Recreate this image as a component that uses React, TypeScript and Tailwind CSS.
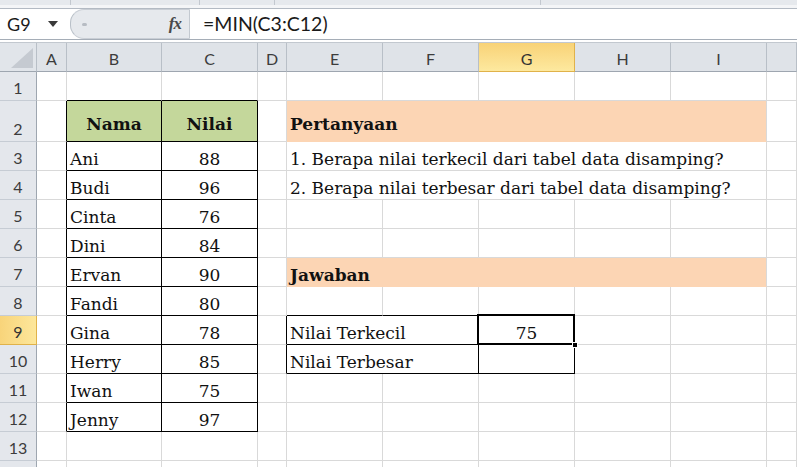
import React from 'react';

type Edge = 'g' | 'k' | 'p' | 'n';

interface Cell {
  span?: 2 | 5;
  r?: Edge;
  b?: Edge;
  fill?: 'green' | 'peach';
  text?: string | number;
  center?: boolean;
  bold?: boolean;
  sel?: boolean;
}

const COLS = ['A', 'B', 'C', 'D', 'E', 'F', 'G', 'H', 'I', 'J'];
const GRID = 'grid grid-cols-[37px_30px_95px_96px_29px_96px_96px_96px_96px_96px_30px]';

const rightCls: Record<Edge, string> = {
  g: 'border-r-[#d9d9d9]',
  k: 'border-r-black',
  p: 'border-r-[#fcd5b4]',
  n: 'border-r-transparent',
};
const bottomCls: Record<Edge, string> = {
  g: 'border-b-[#d9d9d9]',
  k: 'border-b-black',
  p: 'border-b-[#fcd5b4]',
  n: 'border-b-transparent',
};
const spanCls = { 2: 'col-span-2', 5: 'col-span-5' };

const data: [string, number][] = [
  ['Ani', 88], ['Budi', 96], ['Cinta', 76], ['Dini', 84], ['Ervan', 90],
  ['Fandi', 80], ['Gina', 78], ['Herry', 85], ['Iwan', 75], ['Jenny', 97],
];

function buildRow(n: number): Cell[] {
  if (n === 1) return [{}, { b: 'k' }, { b: 'k' }, {}, {}, {}, {}, {}, {}, {}];
  if (n === 2)
    return [
      { r: 'k' },
      { fill: 'green', text: 'Nama', bold: true, center: true, r: 'k', b: 'k' },
      { fill: 'green', text: 'Nilai', bold: true, center: true, r: 'k', b: 'k' },
      {},
      { span: 5, fill: 'peach', text: 'Pertanyaan', bold: true, b: 'p' },
      {},
    ];
  if (n >= 3 && n <= 12) {
    const [name, val] = data[n - 3];
    const row: Cell[] = [
      { r: 'k' },
      { text: name, r: 'k', b: 'k' },
      { text: val, center: true, r: 'k', b: 'k' },
      { r: n === 9 || n === 10 ? 'k' : 'g' },
    ];
    if (n === 3) row.push({ span: 5, text: '1. Berapa nilai terkecil dari tabel data disamping?' });
    else if (n === 4) row.push({ span: 5, text: '2. Berapa nilai terbesar dari tabel data disamping?' });
    else if (n === 7) row.push({ span: 5, fill: 'peach', text: 'Jawaban', bold: true, b: 'p' });
    else if (n === 8) row.push({ b: 'k' }, { b: 'k' }, { b: 'k' }, {}, {});
    else if (n === 9)
      row.push({ span: 2, text: 'Nilai Terkecil', r: 'k', b: 'k' }, { text: 75, center: true, r: 'k', b: 'k', sel: true }, {}, {});
    else if (n === 10)
      row.push({ span: 2, text: 'Nilai Terbesar', r: 'k', b: 'k' }, { r: 'k', b: 'k' }, {}, {});
    else row.push({}, {}, {}, {}, {});
    row.push({});
    return row;
  }
  return COLS.map(() => ({}));
}

function SheetCell({ c }: { c: Cell }) {
  const bg = c.fill === 'green' ? 'bg-[#c4d79b]' : c.fill === 'peach' ? 'bg-[#fcd5b4]' : 'bg-white';
  return (
    <div
      className={`relative flex items-center pt-[5px] border-r border-b whitespace-nowrap overflow-visible ${bg} ${
        rightCls[c.r ?? 'g']
      } ${bottomCls[c.b ?? 'g']} ${c.span ? spanCls[c.span] : ''} ${c.center ? 'justify-center' : 'pl-[3px]'} ${
        c.bold ? 'font-bold' : ''
      }`}
    >
      {c.text}
      {c.sel && (
        <>
          <div className="absolute left-[-2px] top-[-2px] w-[calc(100%+3px)] h-[calc(100%+3px)] border-2 border-black shadow-[inset_0_0_0_1px_#ffffff] z-10" />
          <div className="absolute right-[-4px] bottom-[-4px] w-[6px] h-[6px] bg-black border border-white z-20" />
        </>
      )}
    </div>
  );
}

function Row({ n, h }: { n: number; h: string }) {
  const cells = buildRow(n);
  const active = n === 9;
  return (
    <div className={`${GRID} ${h}`}>
      <div
        className={`flex items-end justify-center border-r border-b font-['Lato',sans-serif] text-[16px] leading-[24px] ${
          active
            ? 'bg-linear-to-r from-[#f8d47a] to-[#fde79b] border-r-[#e0b24a] border-b-[#e0b24a] text-[#333]'
            : 'bg-[#e4e7ec] border-r-[#9ea6b0] border-b-[#c6ccd4] text-[#3c3c3c]'
        }`}
      >
        {n <= 13 ? n : ''}
      </div>
      {cells.map((c, i) => (
        <SheetCell key={i} c={c} />
      ))}
    </div>
  );
}

export default function App() {
  return (
    <div className="w-[797px] h-[467px] overflow-hidden bg-white text-black select-none">
      {/* ribbon remnant */}
      <div className="flex h-[5px] bg-[#e6e9ed]">
        <div className="w-[71px] border-r border-[#c3c8cf]" />
        <div className="w-[129px] border-r border-[#c3c8cf]" />
        <div className="w-[75px] border-r border-[#c3c8cf]" />
        <div className="w-[266px] border-r border-[#c3c8cf]" />
      </div>
      <div className="h-[4px] bg-[#f4f5f7] border-b border-[#b3bac3]" />

      {/* formula bar */}
      <div className="flex h-[30px] font-['Lato',sans-serif]">
        <div className="w-[70px] flex items-center bg-white">
          <span className="pl-[7px] text-[18px] text-[#1a1a1a]">G9</span>
          <svg className="ml-[17px]" width="10" height="6" viewBox="0 0 10 6">
            <path d="M0 0h10L5 6z" fill="#3a3a3a" />
          </svg>
        </div>
        <div className="w-[120px] flex items-center bg-[#e6e9ed] border border-r-[#c3c9d0] border-l-[#b9c0c8] border-y-[#c9ced5] rounded-l-[14px]">
          <span className="ml-[11px] w-[5px] h-[3px] rounded-full bg-[#b7bcc3]" />
          <span className="ml-auto mr-[8px] font-['Liberation_Serif',serif] italic font-bold text-[17px] text-[#4a4a4a] tracking-[-1px]">
            fx
          </span>
        </div>
        <div className="flex-1 flex items-center bg-white">
          <span className="pl-[13px] text-[19.5px] text-[#1a1a1a]">=MIN(C3:C12)</span>
        </div>
      </div>
      <div className="h-[4px] bg-white border-t border-b border-t-[#a5adb7] border-b-[#c2c8cf]" />

      {/* column headers */}
      <div className={`${GRID} h-[29px] font-['Lato',sans-serif] text-[16px] leading-[24px] text-[#3c3c3c]`}>
        <div className="relative bg-[#e1e5ea] border-r border-b border-r-[#b8bfc7] border-b-[#9ea6b0]">
          <svg className="absolute right-[3px] bottom-[3px]" width="22" height="20" viewBox="0 0 22 20">
            <path d="M22 0V20H0z" fill="#c5cad1" />
          </svg>
        </div>
        {COLS.map((l) => (
          <div
            key={l}
            className={`flex items-end justify-center border-r border-b ${
              l === 'G'
                ? 'bg-linear-to-b from-[#f8d276] to-[#fde99f] border-r-[#e0b24a] border-b-[#e0b24a] text-[#333]'
                : 'bg-[#dfe3e8] border-r-[#b8bfc7] border-b-[#9ea6b0]'
            }`}
          >
            {l === 'J' ? '' : l}
          </div>
        ))}
      </div>

      {/* sheet body */}
      <div className="font-['DejaVu_Serif',serif] text-[17px] leading-[20px] text-[#111]">
        <Row n={1} h="h-[29px]" />
        <Row n={2} h="h-[41px]" />
        {[3, 4, 5, 6, 7, 8, 9, 10, 11, 12, 13].map((n) => (
          <Row key={n} n={n} h="h-[29px]" />
        ))}
        <Row n={14} h="h-[29px]" />
      </div>
    </div>
  );
}
